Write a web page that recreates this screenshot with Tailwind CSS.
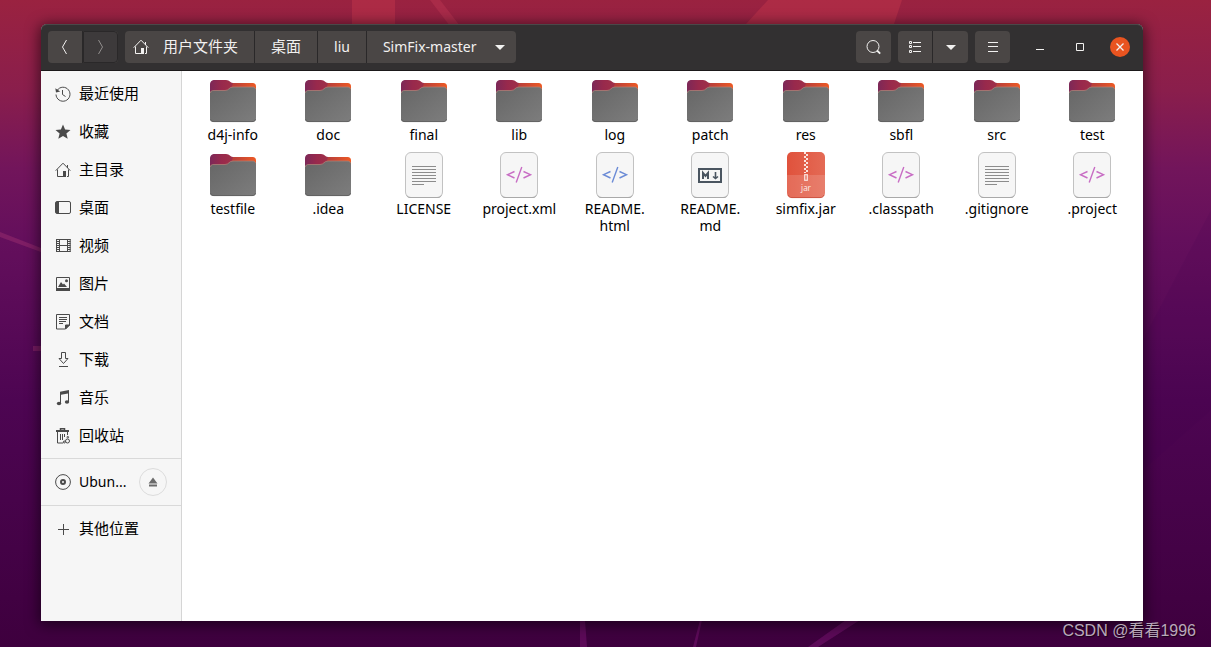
<!DOCTYPE html>
<html lang="zh-CN">
<head>
    <meta charset="UTF-8">
    <meta name="viewport" content="width=device-width, initial-scale=1.0">
    <title>SimFix-master</title>
    <script src="https://cdn.jsdelivr.net/npm/@tailwindcss/browser@4"></script>
</head>
<body class="relative flex min-h-screen bg-[linear-gradient(#9a2240,#8a1e4c_14%,#72155b_26%,#640f5c_37%,#4d0552_62%,#3e003e)] pt-6 pr-[68px] pb-[26px] pl-[41px] font-['Noto_Sans','Noto_Sans_CJK_SC',sans-serif] text-sm text-black">

    <!-- Icon set -->
    <svg class="absolute size-0" aria-hidden="true">
        <defs>
            <linearGradient id="tab" x1="0" y1="0" x2="1" y2="0">
                <stop offset="0" stop-color="#7c2858"/>
                <stop offset=".5" stop-color="#98294c"/>
                <stop offset="1" stop-color="#a03048"/>
            </linearGradient>
            <linearGradient id="back" x1="0" y1="0" x2="1" y2="0">
                <stop offset="0" stop-color="#8c2850"/>
                <stop offset=".55" stop-color="#bd4138"/>
                <stop offset="1" stop-color="#ee5a24"/>
            </linearGradient>
            <linearGradient id="front" x1="0" y1="0" x2="1" y2="1">
                <stop offset="0" stop-color="#666"/>
                <stop offset="1" stop-color="#7d7d7d"/>
            </linearGradient>
            <linearGradient id="jar" x1="0" y1="0" x2="1" y2="0">
                <stop offset="0" stop-color="#e0523c"/>
                <stop offset="1" stop-color="#e46a55"/>
            </linearGradient>
        </defs>

        <symbol id="folder" viewBox="0 0 48 48">
            <path fill="url(#back)" d="M1 10c0-3 1-4 4-4h38c3 0 4 1 4 4v20H1z"/>
            <path fill="url(#tab)" d="M1 8c0-3.500 1.500-5 5-5h11c4 0 4 3 7 3l-2 7-4 4H1z"/>
            <path fill="url(#front)" d="M1 17c0-3 1-3.500 4-3.500h11c4 0 4-3.500 8-3.500h19c3 0 4 1 4 4v27c0 3-1 4-4 4H5c-3 0-4-1-4-4z"/>
            <path fill="none" stroke="#b5857a" stroke-width=".7" d="M1.500 16c.3-2 1-2.500 3.500-2.500h11c4 0 4-3.500 8-3.500h19c2 0 3 .5 3.500 2"/>
            <path fill="none" stroke="#5c5c5c" stroke-width=".8" d="M1.500 42c.5 2 1.500 2.600 3.500 2.600h38c2 0 3-.6 3.500-2.600"/>
        </symbol>
        <symbol id="page" viewBox="0 0 48 48">
            <rect x="5.500" y="1.500" width="37" height="45" rx="5.500" fill="#f6f6f6" stroke="#c2c2c2"/>
            <path fill="none" stroke="#a9a9a9" d="M6.500 44.500c1 1.500 2 2 3.500 2h28c1.500 0 2.500-.5 3.500-2"/>
        </symbol>
        <symbol id="text" viewBox="0 0 48 48">
            <use href="#page"/>
            <path stroke="#8c8c8c" d="M12 15.500h24M12 18.500h24M12 21.500h24M12 24.500h24M12 27.500h24M12 30.500h24M12 33.500h12"/>
        </symbol>
        <symbol id="code" viewBox="0 0 48 48">
            <use href="#page"/>
            <path fill="none" stroke="currentColor" stroke-width="1.400" d="m19.500 20.500-7 3.200 7 3.300M28.500 20.500l7 3.200-7 3.300M26.800 16l-5.600 15.500"/>
        </symbol>
        <symbol id="markdown" viewBox="0 0 48 48">
            <use href="#page"/>
            <rect x="13" y="18" width="22" height="13" fill="none" stroke="#4a5560" stroke-width="2"/>
            <path fill="none" stroke="#4a5560" stroke-width="2" d="M17 28v-6l2.500 3 2.500-3v6"/>
            <path fill="none" stroke="#4a5560" stroke-width="1.600" d="M29.500 21v6M27 25.500l2.500 2 2.500-2"/>
        </symbol>

        <symbol id="recent" viewBox="0 0 16 16" fill="none" stroke="currentColor">
            <path d="M2.200 4.300A7 7 0 1 1 1 8.500M7.500 4v4.500l3 2"/>
            <path fill="currentColor" stroke="none" d="M.3 2.200 1 6.500l4.200-1z"/>
        </symbol>
        <symbol id="star" viewBox="0 0 16 16" fill="currentColor">
            <path d="m8 .5 2.100 5.100 5.400.4-4.100 3.500 1.300 5.300L8 12l-4.700 2.800 1.300-5.300L.5 6l5.400-.4z"/>
        </symbol>
        <symbol id="home" viewBox="0 0 16 16" fill="none" stroke="currentColor">
            <path d="M.7 8.700 8 1.200l7.300 7.500M2.500 7.500v7h6M13.500 7.500v7H12M12.500 3v3"/>
            <path fill="currentColor" stroke="none" d="M8 9h3v6H8z"/>
        </symbol>
        <symbol id="desktop" viewBox="0 0 16 16">
            <rect x=".5" y="1.500" width="15" height="12" rx="1.500" fill="none" stroke="currentColor"/>
            <path fill="currentColor" d="M1 2h3v11H1z"/>
        </symbol>
        <symbol id="video" viewBox="0 0 16 16" fill="none" stroke="currentColor">
            <path d="M1.500 1v13M4.500 1v13M12.500 1v13M15.200 1v13M4 1.500h9M4 7.500h9M4 13.500h9"/>
            <path stroke-dasharray="1 1" stroke-width="3" d="M3 1v13M14 1v13"/>
        </symbol>
        <symbol id="picture" viewBox="0 0 16 16" fill="currentColor">
            <path fill="none" stroke="currentColor" d="M1.500 1.500h13v13h-13z"/>
            <path d="M1 12h14v3H1zM3 11l3-5 2 2.500L9 7.500l3 3.500z"/>
            <circle cx="11.500" cy="4.800" r="1.500"/>
        </symbol>
        <symbol id="document" viewBox="0 0 16 16" fill="none" stroke="currentColor">
            <path d="M1.500.5h13v10.500l-4 4h-9zM4 3.500h8M4 5.500h8M4 7.500h7M4 9.500h4"/>
            <path fill="currentColor" d="M10.500 11h4l-4 4z"/>
        </symbol>
        <symbol id="download" viewBox="0 0 16 16" fill="none" stroke="currentColor">
            <path d="M6.500.5h4v6H13l-4.500 5L4 6.500h2.500zM4 14.500h9"/>
        </symbol>
        <symbol id="music" viewBox="0 0 16 16" fill="currentColor">
            <path d="M5 1.700 14 0v12h-1V3.500L6 4.800V14H5z"/>
            <ellipse cx="4" cy="13.500" rx="2.200" ry="1.800"/>
            <ellipse cx="12" cy="12" rx="2.200" ry="1.800"/>
        </symbol>
        <symbol id="trash" viewBox="0 0 16 16" fill="none" stroke="currentColor">
            <path d="M5.500 2V.8h4V2" stroke-width="1.500"/>
            <path d="M1 3h13" stroke-width="2"/>
            <path d="M2.500 4v11H8M5.500 6v6M7.500 6v6M9.500 6v3M12.500 4v3"/>
            <circle cx="12.500" cy="13" r="2"/>
            <circle cx="12.800" cy="9.200" r=".8"/>
            <circle cx="9.300" cy="14" r="1"/>
        </symbol>
        <symbol id="disc" viewBox="0 0 16 16" fill="none" stroke="currentColor">
            <circle cx="8" cy="8" r="7.400"/>
            <circle cx="8" cy="8" r="2" stroke-width="2"/>
        </symbol>
        <symbol id="plus" viewBox="0 0 16 16" stroke="currentColor">
            <path d="M3 8.500h11M8.500 3v11"/>
        </symbol>
        <symbol id="eject" viewBox="0 0 16 16" fill="currentColor">
            <path d="m8 3.500 4.500 6h-9zM4 10.500h8v2H4z"/>
        </symbol>
        <symbol id="down" viewBox="0 0 16 16" fill="currentColor">
            <path d="M3 6h10l-5 5z"/>
        </symbol>
        <symbol id="search" viewBox="0 0 16 16" fill="none" stroke="currentColor">
            <circle cx="7" cy="7.500" r="6"/>
            <path stroke-width="1.800" d="m11 11.500 3.200 3.200"/>
        </symbol>
        <symbol id="list" viewBox="0 0 16 16" fill="none" stroke="currentColor">
            <path d="M6 3.500h8M6 7.500h8M6 12.500h8M2.500 2.500h2v2h-2zM2.500 6.500h2v2h-2zM2.500 11.500h2v2h-2z"/>
        </symbol>
        <symbol id="menu" viewBox="0 0 16 16" stroke="currentColor">
            <path d="M3 3.500h10M3 7.500h10M3 12.500h10"/>
        </symbol>
    </svg>

    <!-- Wallpaper shards -->
    <svg class="absolute inset-0 h-full w-full" viewBox="0 0 1211 647" preserveAspectRatio="none" aria-hidden="true">
        <path fill="#c0334a" fill-opacity=".5" d="M352 0h43v30h-43zM768 0h134l-12 36H735z"/>
        <path fill="#c03a54" fill-opacity=".4" d="M430 0h10l20 26h-10z"/>
        <path fill="#a03070" fill-opacity=".45" d="M0 232v5l41 15v-4zM33 346h8v5h-8z"/>
        <path fill="#8a1a80" fill-opacity=".4" d="M580 620h5l2 27h-7zM700 620h2l-6 27h-3zM846 620h14l-42 27h-10z"/>
        <path fill="#3a0050" fill-opacity=".1" d="M1211 210v200l-68 60V340z"/>
    </svg>

    <main class="relative flex min-w-0 flex-1 flex-col rounded-t-md bg-white shadow-[0_2px_14px_2px_rgba(0,0,0,0.55)]">
        <!-- Title bar -->
        <header class="flex items-center rounded-t-md border-b border-[#1b191a] bg-[#323031] py-[7px] pr-[3px] pl-[7px] text-[#f2f1f0] inset-shadow-[0_1px_0_#4a4849]">
            <div class="flex h-8 divide-x divide-[#2a2829] rounded-sm bg-[#4a4645]">
                <button class="flex w-[35px] items-center justify-center" aria-label="后退">
                    <svg class="size-4" viewBox="0 0 16 16" fill="none" stroke="currentColor"><path d="m9.500 1-4 7 4 7"/></svg>
                </button>
                <button class="flex w-[35px] items-center justify-center rounded-r-sm border border-[#2a2829] bg-[#3d3a3b] text-[#918e8d]" aria-label="前进" disabled>
                    <svg class="size-4" viewBox="0 0 16 16" fill="none" stroke="currentColor"><path d="m5.500 1 4 7-4 7"/></svg>
                </button>
            </div>

            <nav class="ml-[7px] flex h-8 divide-x divide-[#2a2829] rounded-sm bg-[#4a4645]" aria-label="路径">
                <button class="flex items-center gap-3.5 px-2 pr-4 text-[15px]">
                    <svg class="size-4"><use href="#home"/></svg>用户文件夹
                </button>
                <button class="px-4 text-[15px]">桌面</button>
                <button class="px-4">liu</button>
                <button class="flex items-center gap-4 pr-2 pl-4">
                    SimFix-master<svg class="size-4"><use href="#down"/></svg>
                </button>
            </nav>

            <div class="ml-auto flex h-8 gap-[7px]">
                <button class="flex w-[35px] items-center justify-center rounded-sm bg-[#4a4645]" aria-label="搜索">
                    <svg class="size-4"><use href="#search"/></svg>
                </button>
                <div class="flex divide-x divide-[#2a2829] rounded-sm bg-[#4a4645]">
                    <button class="flex w-[35px] items-center justify-center" aria-label="列表视图">
                        <svg class="size-4"><use href="#list"/></svg>
                    </button>
                    <button class="flex w-[35px] items-center justify-center" aria-label="视图选项">
                        <svg class="size-4"><use href="#down"/></svg>
                    </button>
                </div>
                <button class="flex w-[35px] items-center justify-center rounded-sm bg-[#4a4645]" aria-label="菜单">
                    <svg class="size-4"><use href="#menu"/></svg>
                </button>
            </div>

            <div class="ml-2.5 flex">
                <button class="flex w-10 items-center justify-center" aria-label="最小化">
                    <svg class="size-4" viewBox="0 0 16 16" stroke="currentColor"><path d="M4 10.500h8"/></svg>
                </button>
                <button class="flex w-10 items-center justify-center" aria-label="最大化">
                    <svg class="size-4" viewBox="0 0 16 16" fill="none" stroke="currentColor"><path d="M4.500 4.500h7v7h-7z"/></svg>
                </button>
                <button class="flex w-10 items-center justify-center" aria-label="关闭">
                    <span class="flex size-5 items-center justify-center rounded-full bg-[#e95420]">
                        <svg class="size-4" viewBox="0 0 16 16" stroke="currentColor" stroke-width="1.300"><path d="m4.500 4.500 7 7M11.500 4.500l-7 7"/></svg>
                    </span>
                </button>
            </div>
        </header>

        <div class="flex flex-1">
            <!-- Sidebar -->
            <aside class="w-[141px] shrink-0 border-r border-[#d5d5d5] bg-[#f6f6f6] text-[15px]">
                <nav class="pt-1 pb-[3px]" aria-label="位置">
                    <a href="#" class="flex h-[38px] items-center gap-2 pl-3.5"><svg class="size-4 text-[#4a4a4a]"><use href="#recent"/></svg>最近使用</a>
                    <a href="#" class="flex h-[38px] items-center gap-2 pl-3.5"><svg class="size-4 text-[#4a4a4a]"><use href="#star"/></svg>收藏</a>
                    <a href="#" class="flex h-[38px] items-center gap-2 pl-3.5"><svg class="size-4 text-[#4a4a4a]"><use href="#home"/></svg>主目录</a>
                    <a href="#" class="flex h-[38px] items-center gap-2 pl-3.5"><svg class="size-4 text-[#4a4a4a]"><use href="#desktop"/></svg>桌面</a>
                    <a href="#" class="flex h-[38px] items-center gap-2 pl-3.5"><svg class="size-4 text-[#4a4a4a]"><use href="#video"/></svg>视频</a>
                    <a href="#" class="flex h-[38px] items-center gap-2 pl-3.5"><svg class="size-4 text-[#4a4a4a]"><use href="#picture"/></svg>图片</a>
                    <a href="#" class="flex h-[38px] items-center gap-2 pl-3.5"><svg class="size-4 text-[#4a4a4a]"><use href="#document"/></svg>文档</a>
                    <a href="#" class="flex h-[38px] items-center gap-2 pl-3.5"><svg class="size-4 text-[#4a4a4a]"><use href="#download"/></svg>下载</a>
                    <a href="#" class="flex h-[38px] items-center gap-2 pl-3.5"><svg class="size-4 text-[#4a4a4a]"><use href="#music"/></svg>音乐</a>
                    <a href="#" class="flex h-[38px] items-center gap-2 pl-3.5"><svg class="size-4 text-[#4a4a4a]"><use href="#trash"/></svg>回收站</a>
                </nav>
                <div class="flex items-center border-t border-[#d9d9d9] py-1 pr-3.5">
                    <a href="#" class="flex h-[38px] flex-1 items-center gap-2 pl-3.5 text-sm"><svg class="size-4 text-[#4a4a4a]"><use href="#disc"/></svg>Ubun...</a>
                    <button class="flex size-7 items-center justify-center rounded-full border border-[#dcdcdc] text-[#6a6a6a]" aria-label="弹出">
                        <svg class="size-4"><use href="#eject"/></svg>
                    </button>
                </div>
                <div class="border-t border-[#d9d9d9] py-1">
                    <a href="#" class="flex h-[38px] items-center gap-2 pl-3.5"><svg class="size-4 text-[#4a4a4a]"><use href="#plus"/></svg>其他位置</a>
                </div>
            </aside>

            <!-- Files -->
            <section class="grid flex-1 grid-cols-10 content-start gap-y-2 px-[3px] pt-1.5 text-center leading-[17px]" aria-label="文件">
                <a href="#" class="flex flex-col items-center gap-px"><svg class="size-12"><use href="#folder"/></svg>d4j-info</a>
                <a href="#" class="flex flex-col items-center gap-px"><svg class="size-12"><use href="#folder"/></svg>doc</a>
                <a href="#" class="flex flex-col items-center gap-px"><svg class="size-12"><use href="#folder"/></svg>final</a>
                <a href="#" class="flex flex-col items-center gap-px"><svg class="size-12"><use href="#folder"/></svg>lib</a>
                <a href="#" class="flex flex-col items-center gap-px"><svg class="size-12"><use href="#folder"/></svg>log</a>
                <a href="#" class="flex flex-col items-center gap-px"><svg class="size-12"><use href="#folder"/></svg>patch</a>
                <a href="#" class="flex flex-col items-center gap-px"><svg class="size-12"><use href="#folder"/></svg>res</a>
                <a href="#" class="flex flex-col items-center gap-px"><svg class="size-12"><use href="#folder"/></svg>sbfl</a>
                <a href="#" class="flex flex-col items-center gap-px"><svg class="size-12"><use href="#folder"/></svg>src</a>
                <a href="#" class="flex flex-col items-center gap-px"><svg class="size-12"><use href="#folder"/></svg>test</a>

                <a href="#" class="flex flex-col items-center gap-px"><svg class="size-12"><use href="#folder"/></svg>testfile</a>
                <a href="#" class="flex flex-col items-center gap-px"><svg class="size-12"><use href="#folder"/></svg>.idea</a>
                <a href="#" class="flex flex-col items-center gap-px"><svg class="size-12"><use href="#text"/></svg>LICENSE</a>
                <a href="#" class="flex flex-col items-center gap-px"><svg class="size-12 text-[#c86dc4]"><use href="#code"/></svg>project.xml</a>
                <a href="#" class="flex flex-col items-center gap-px"><svg class="size-12 text-[#6b8bd6]"><use href="#code"/></svg><span>README.<br>html</span></a>
                <a href="#" class="flex flex-col items-center gap-px"><svg class="size-12"><use href="#markdown"/></svg><span>README.<br>md</span></a>
                <a href="#" class="flex flex-col items-center gap-px">
                    <svg class="size-12" viewBox="0 0 48 48">
                        <rect x="5" y="1" width="38" height="46" rx="5" fill="url(#jar)"/>
                        <path fill="#fff" fill-opacity=".14" d="M5 24h38v18c0 3-2 5-5 5H10c-3 0-5-2-5-5z"/>
                        <path fill="none" stroke="#c54a38" stroke-width=".8" d="M6 44c1 2 2 2.600 4 2.600h28c2 0 3-.6 4-2.600"/>
                        <path stroke="#fbe3de" stroke-width="2" stroke-dasharray="2 2" d="M23 1v21M25 3v19"/>
                        <rect x="22.700" y="23.700" width="2.600" height="5.600" fill="none" stroke="#fbe3de" stroke-width="1.200"/>
                        <text x="24" y="39.500" text-anchor="middle" font-size="8" fill="#fbe9e5">jar</text>
                    </svg>
                    simfix.jar
                </a>
                <a href="#" class="flex flex-col items-center gap-px"><svg class="size-12 text-[#c86dc4]"><use href="#code"/></svg>.classpath</a>
                <a href="#" class="flex flex-col items-center gap-px"><svg class="size-12"><use href="#text"/></svg>.gitignore</a>
                <a href="#" class="flex flex-col items-center gap-px"><svg class="size-12 text-[#c86dc4]"><use href="#code"/></svg>.project</a>
            </section>
        </div>
    </main>

    <p class="absolute right-[15px] bottom-1 font-['Liberation_Sans','Noto_Sans_CJK_SC',sans-serif] text-base text-[#b9a9b9] text-shadow-[1px_1px_1px_rgba(0,0,0,0.6)]">CSDN @看看1996</p>
</body>
</html>
